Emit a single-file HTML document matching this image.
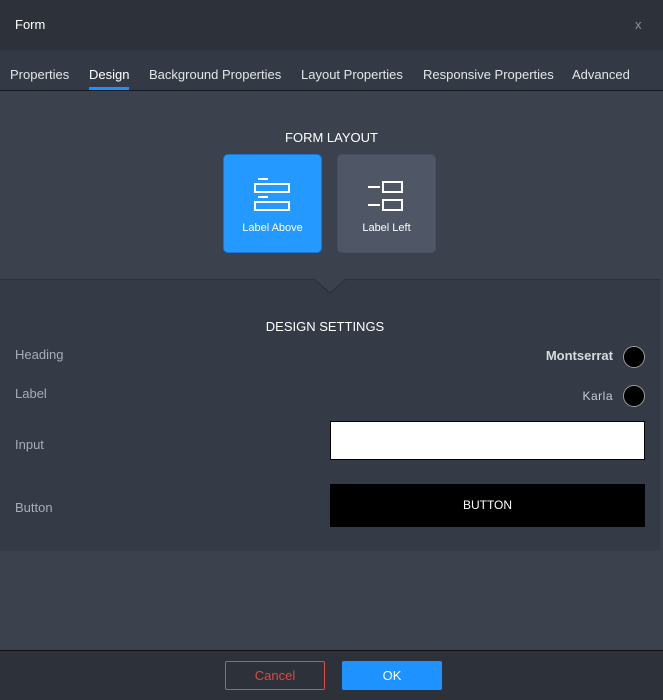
<!DOCTYPE html>
<html><head><style>
*{margin:0;padding:0;box-sizing:border-box}
body{width:663px;height:700px;background:#3b414d;font-family:"Liberation Sans",sans-serif;position:relative;overflow:hidden;color:#fff}
.a{position:absolute}
.hdr{left:0;top:0;width:663px;height:50px;background:#2d3139}
.tabs{left:0;top:50px;width:663px;height:41px;background:#343a45;border-bottom:1px solid #16191e}
.tab{top:67px;font-size:13px;color:#e3e6ea}
.lbl{font-size:13px;color:#a7adb7;left:15px}
.card{width:99px;height:99px;border-radius:5px;top:154px}
</style></head><body>
<div class="a hdr"></div>
<div class="a" style="left:15px;top:17px;font-size:13px;color:#fff">Form</div>
<div class="a" style="left:635px;top:17px;font-size:13px;color:#8d939c">x</div>
<div class="a tabs"></div>
<div class="a tab" style="left:10px">Properties</div>
<div class="a tab" style="left:89px;color:#fff">Design</div>
<div class="a" style="left:89px;top:87px;width:40px;height:3px;background:#1e90ff"></div>
<div class="a tab" style="left:149px">Background Properties</div>
<div class="a tab" style="left:301px">Layout Properties</div>
<div class="a tab" style="left:423px">Responsive Properties</div>
<div class="a tab" style="left:572px">Advanced</div>

<div class="a" style="left:0;width:663px;text-align:center;top:130px;font-size:13px;color:#fff">FORM LAYOUT</div>
<div class="a card" style="left:223px;background:#2499ff;border:1px solid #1877d6"></div>
<svg class="a" style="left:254px;top:178px" width="38" height="35" fill="none" stroke="#fff" stroke-width="2"><path d="M4 1h10M1 6h34v8H1zM4 19h10M1 24h34v8H1z"/></svg>
<div class="a" style="left:223px;width:99px;top:222px;text-align:center;font-size:11px">Label Above</div>
<div class="a card" style="left:337px;background:#4f5766;border:1px solid #465060"></div>
<svg class="a" style="left:367px;top:181px" width="38" height="30" fill="none" stroke="#fff" stroke-width="2"><path d="M1 6h12M16 1h19v10H16zM1 24h12M16 19h19v10H16z"/></svg>
<div class="a" style="left:337px;width:99px;top:222px;text-align:center;font-size:11px">Label Left</div>

<div class="a" style="left:0;top:279px;width:660px;height:272px;background:#343a46;border-top:1px solid #2a2f38"></div>
<svg class="a" style="left:314px;top:278px" width="32" height="16"><path d="M0 1L16 15L32 1" fill="#3b414d" stroke="#2a2f38" stroke-width="1"/></svg>
<div class="a" style="left:0;width:650px;text-align:center;top:319px;font-size:13px;color:#fff">DESIGN SETTINGS</div>
<div class="a lbl" style="top:347px">Heading</div>
<div class="a lbl" style="top:386px">Label</div>
<div class="a lbl" style="top:437px">Input</div>
<div class="a lbl" style="top:500px">Button</div>
<div class="a" style="right:50px;top:348px;font-size:13px;font-weight:bold;color:#d7dbe0">Montserrat</div>
<div class="a" style="right:50px;top:389px;font-size:12px;color:#c9ccd2;letter-spacing:.5px">Karla</div>
<div class="a" style="left:623px;top:346px;width:22px;height:22px;border-radius:50%;background:#000;border:1px solid #9a9a9a"></div>
<div class="a" style="left:623px;top:385px;width:22px;height:22px;border-radius:50%;background:#000;border:1px solid #9a9a9a"></div>
<div class="a" style="left:330px;top:421px;width:315px;height:39px;background:#fff;border:1px solid #000"></div>
<div class="a" style="left:330px;top:484px;width:315px;height:43px;background:#000;color:#fff;font-size:12px;text-align:center;line-height:43px">BUTTON</div>

<div class="a" style="left:0;top:650px;width:663px;height:50px;background:#2d3139;border-top:1px solid #0d0f12"></div>
<div class="a" style="left:225px;top:661px;width:100px;height:29px;border:1px solid #e04a3f;border-radius:2px;color:#e04a3f;font-size:13px;text-align:center;line-height:27px">Cancel</div>
<div class="a" style="left:342px;top:661px;width:100px;height:29px;background:#1e93ff;border-radius:2px;color:#fff;font-size:13px;text-align:center;line-height:29px">OK</div>
</body></html>
